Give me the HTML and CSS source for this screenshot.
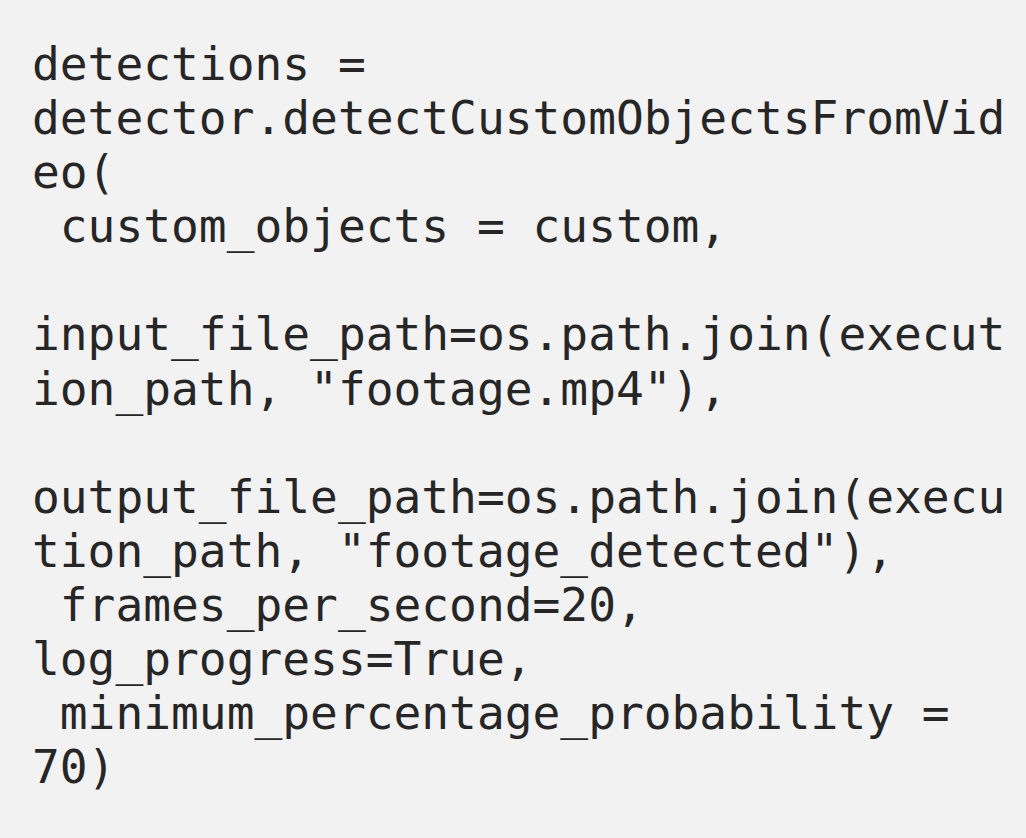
FILE: index.html
```html
<!DOCTYPE html>
<html>
<head>
<meta charset="utf-8">
<link rel="stylesheet" href="styles.css">
</head>
<body>
<pre class="code">detections =
detector.detectCustomObjectsFromVid
eo(
 custom_objects = custom,

input_file_path=os.path.join(execut
ion_path, "footage.mp4"),

output_file_path=os.path.join(execu
tion_path, "footage_detected"),
 frames_per_second=20,
log_progress=True,
 minimum_percentage_probability =
70)</pre>
</body>
</html>
```

FILE: styles.css
```css
html, body {
  margin: 0;
  padding: 0;
  background: #f2f2f2;
}
.code {
  margin: 0;
  padding: 37px 0 0 32px;
  font-family: "DejaVu Sans Mono", monospace;
  font-size: 46.2px;
  line-height: 54.1px;
  color: #262626;
  white-space: pre;
}
```
